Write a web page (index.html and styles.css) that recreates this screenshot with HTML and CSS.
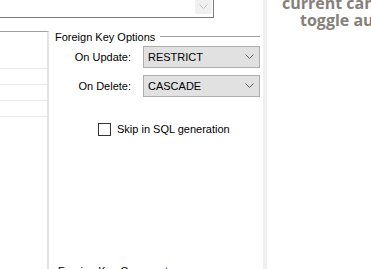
FILE: index.html
```html
<!DOCTYPE html>
<html>
<head>
<meta charset="utf-8">
<link rel="stylesheet" href="styles.css">
</head>
<body>
<div class="app">
  <div class="main">
    <div class="topbar">
      <div class="combo">
        <div class="combo-btn">
          <svg width="9" height="6" viewBox="0 0 9 6"><path d="M0.5 0.5 L4.5 4.5 L8.5 0.5" fill="none" stroke="#c4c4c4" stroke-width="1"/></svg>
        </div>
      </div>
    </div>
    <div class="body">
      <div class="list">
        <div class="list-head"></div>
        <div class="row"></div>
        <div class="row"></div>
        <div class="row"></div>
        <div class="row"></div>
      </div>
      <div class="details">
        <div class="group-title"><span>Foreign Key Options</span><div class="group-line"></div></div>
        <div class="field">
          <label class="field-label">On Update:</label>
          <div class="select"><span>RESTRICT</span>
            <svg width="9" height="6" viewBox="0 0 9 6"><path d="M0.5 0.5 L4.5 4.5 L8.5 0.5" fill="none" stroke="#606060" stroke-width="1"/></svg>
          </div>
        </div>
        <div class="field">
          <label class="field-label">On Delete:</label>
          <div class="select"><span>CASCADE</span>
            <svg width="9" height="6" viewBox="0 0 9 6"><path d="M0.5 0.5 L4.5 4.5 L8.5 0.5" fill="none" stroke="#606060" stroke-width="1"/></svg>
          </div>
        </div>
        <div class="check"><span class="box"></span><span>Skip in SQL generation</span></div>
        <div class="spacer"></div>
        <div class="comments">Foreign Key Comments</div>
      </div>
    </div>
  </div>
  <div class="splitter"></div>
  <div class="side">
    <div class="hint l1">current canvas</div>
    <div class="hint l2">toggle auto</div>
  </div>
</div>
</body>
</html>
```
FILE: styles.css
```css
html, body {
  margin: 0;
  padding: 0;
  background: #ffffff;
  overflow: hidden;
}
body {
  font-family: "Liberation Sans", Arial, sans-serif;
  font-size: 11px;
  color: #000;
}
.app {
  display: flex;
  width: 371px;
  height: 269px;
  overflow: hidden;
}
.main {
  width: 263px;
  flex: none;
  display: flex;
  flex-direction: column;
}
.topbar {
  height: 18px;
  flex: none;
}
.combo {
  width: 213px;
  height: 17px;
  border-right: 1px solid #7a7a7a;
  border-bottom: 1px solid #7a7a7a;
  display: flex;
  justify-content: flex-end;
  box-sizing: content-box;
}
.combo-btn {
  width: 17px;
  height: 14px;
  margin-right: 1px;
  background: #f0f0f0;
  display: flex;
  align-items: center;
  justify-content: center;
}
.body {
  flex: 1;
  display: flex;
}
.list {
  width: 47px;
  flex: none;
  margin-top: 13px;
  border-top: 1px solid #a0a0a0;
  border-right: 2px solid #e3e3e3;
  box-sizing: content-box;
}
.list-head {
  height: 36px;
}
.row {
  height: 15px;
  border-top: 1px solid #e8e8e8;
}
.details {
  flex: 1;
  min-width: 0;
  padding: 11px 3px 0 6px;
  display: flex;
  flex-direction: column;
}
.group-title {
  display: flex;
  align-items: center;
  height: 15px;
  white-space: nowrap;
}
.group-line {
  flex: 1;
  height: 1px;
  background: #a0a0a0;
  margin-left: 5px;
  margin-top: -1px;
}
.field {
  display: flex;
  align-items: center;
  margin-top: 2px;
  margin-bottom: 5px;
}
.field-label {
  width: 76px;
  flex: none;
  text-align: right;
  margin-right: 12px;
}
.select {
  width: 118px;
  height: 22px;
  box-sizing: border-box;
  background: #e1e1e1;
  border: 1px solid #adadad;
  display: flex;
  align-items: center;
  justify-content: space-between;
  padding: 0 5px 0 4px;
}
.select svg { flex: none; }
.check {
  display: flex;
  align-items: center;
  margin-top: 20px;
  margin-left: 43px;
  height: 14px;
}
.box {
  width: 11px;
  height: 11px;
  border: 1px solid #333;
  background: #fff;
  margin-right: 6px;
}
.spacer { flex: 1; }
.comments {
  margin-left: 3px;
  margin-bottom: -10px;
  height: 14px;
}
.splitter {
  width: 4px;
  flex: none;
  background: #f0f0f0;
}
.side {
  flex: 1;
  overflow: hidden;
  font-family: "Open Sans", sans-serif;
  font-weight: 700;
  font-size: 16px;
  color: #858079;
  white-space: nowrap;
  line-height: 17px;
  margin-top: -5px;
}
.l1 { padding-left: 15px; }
.l2 { padding-left: 33px; }
```
